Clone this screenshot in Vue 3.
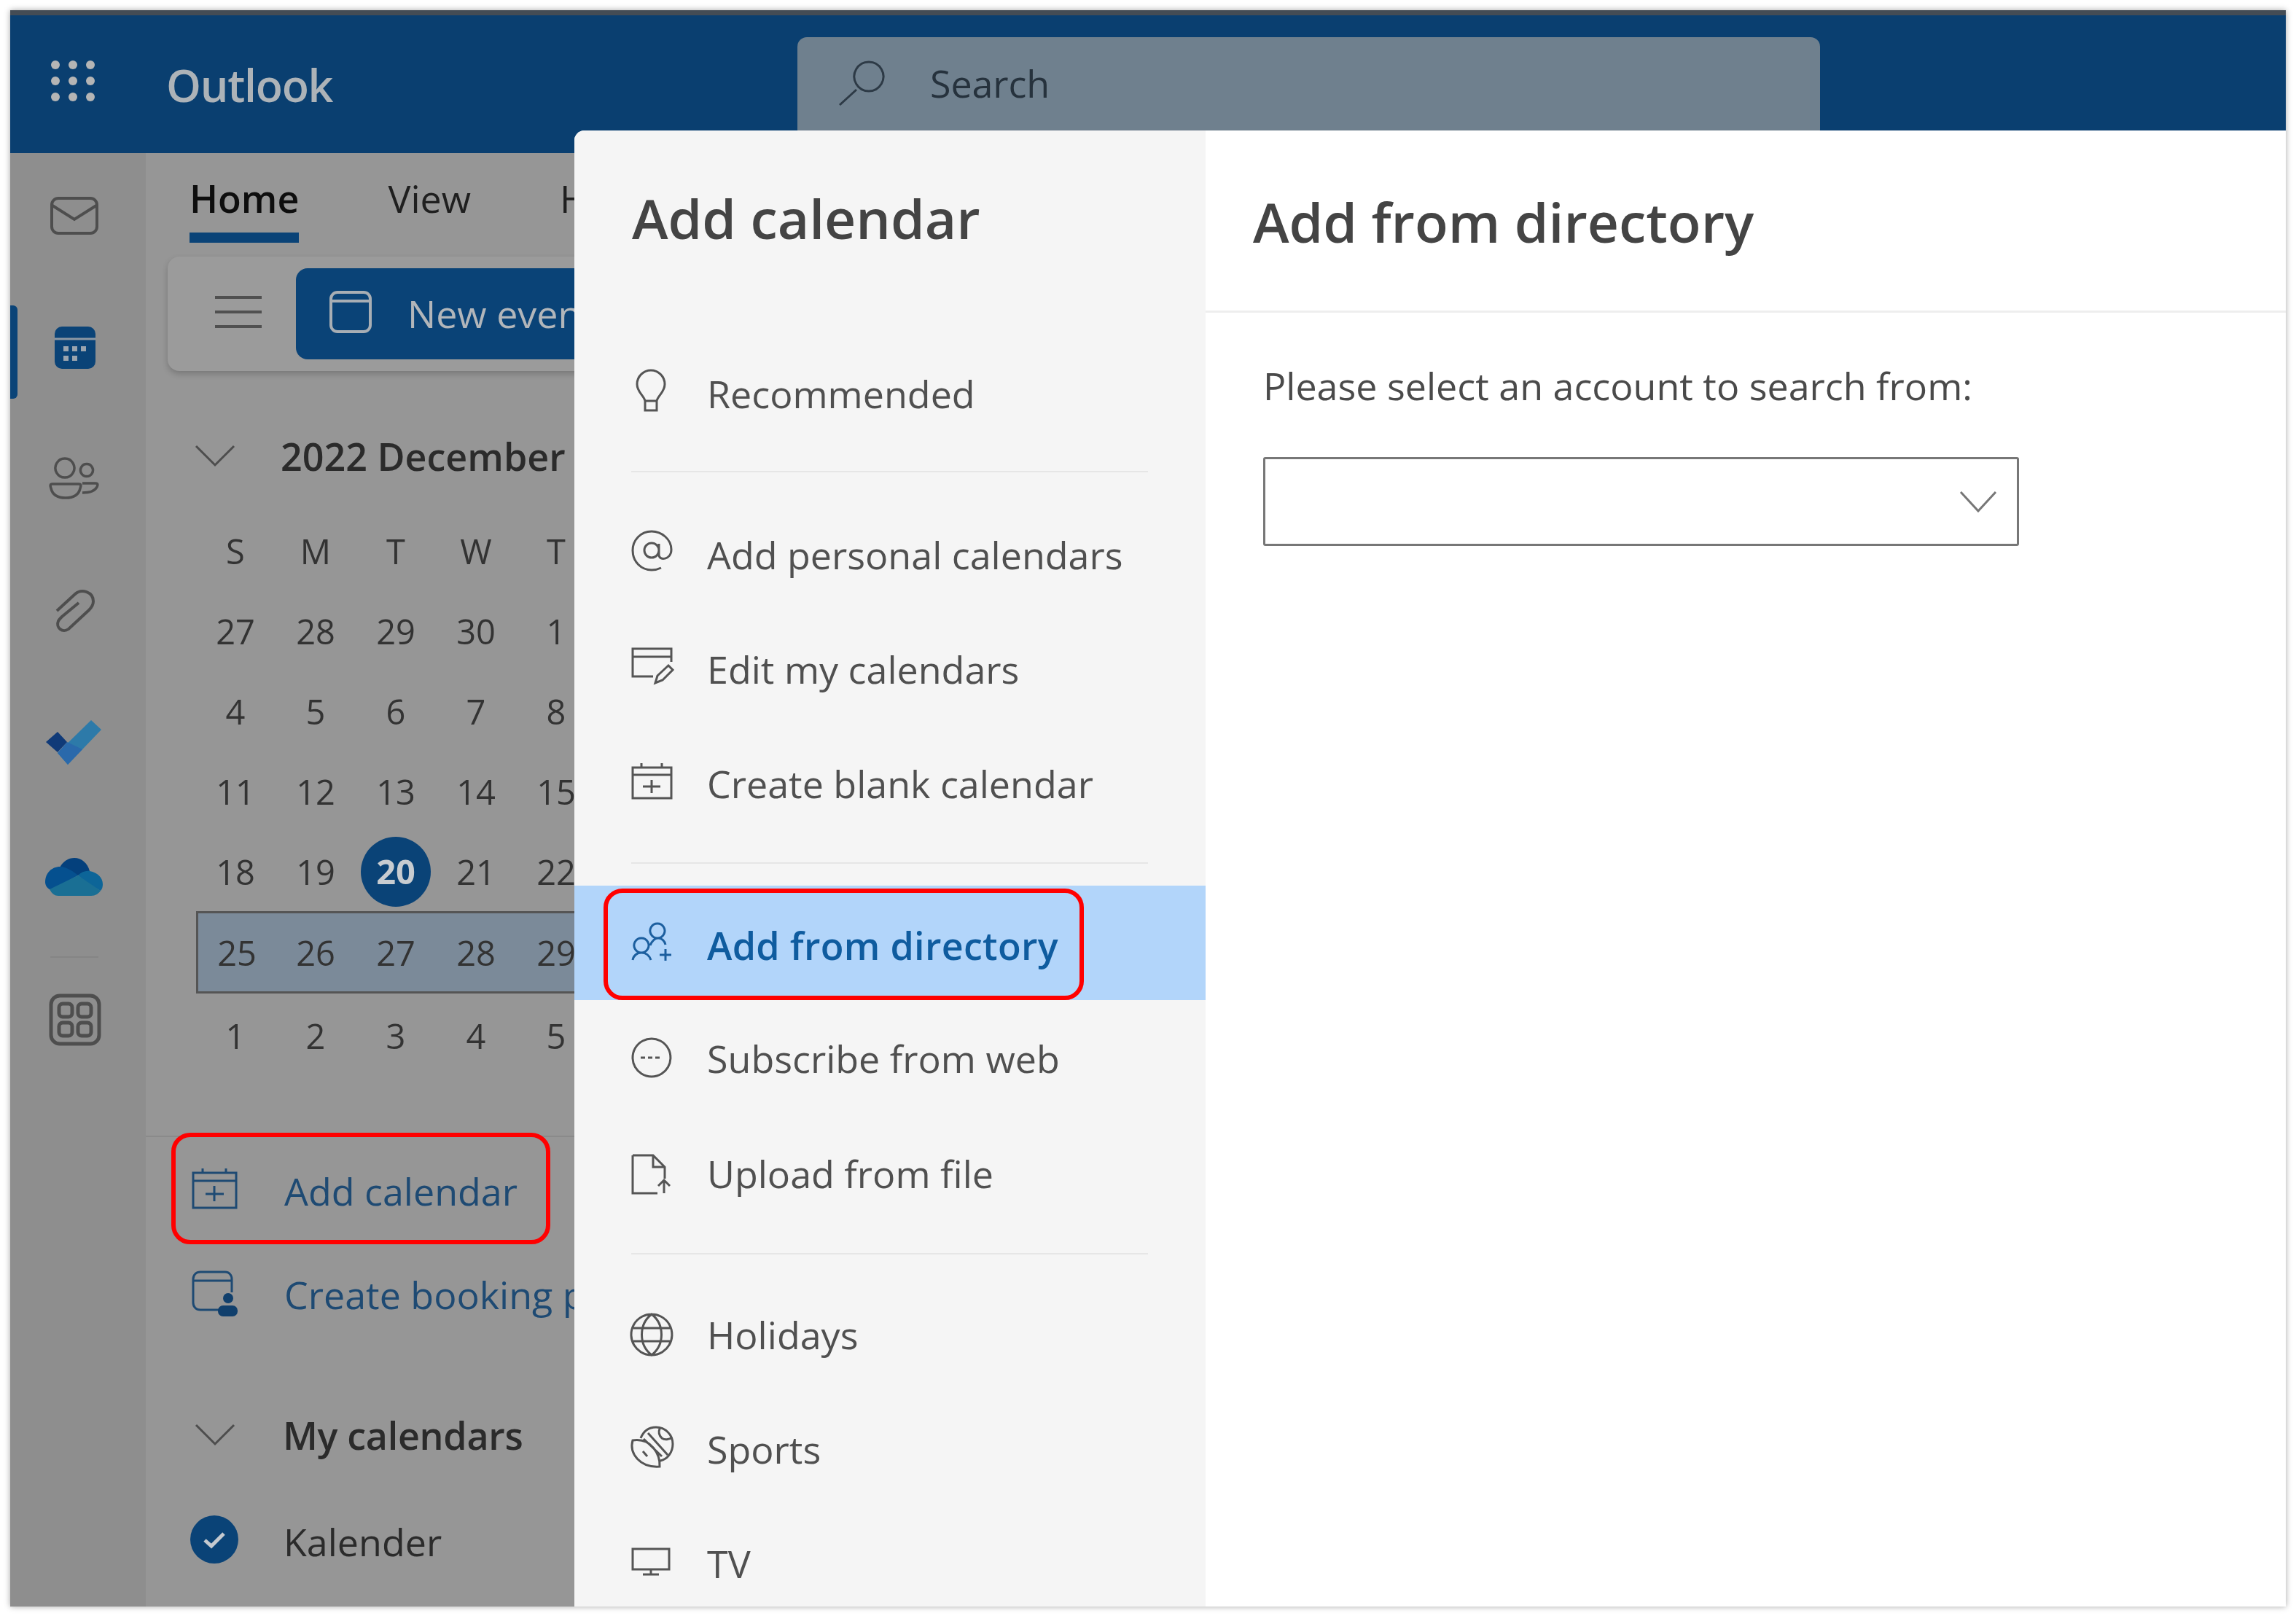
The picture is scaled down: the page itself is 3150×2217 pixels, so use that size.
<script setup>
const dayNames = ['S', 'M', 'T', 'W', 'T', 'F']
const weeks = [
  { days: ['27', '28', '29', '30', '1', '2'] },
  { days: ['4', '5', '6', '7', '8', '9'] },
  { days: ['11', '12', '13', '14', '15', '16'] },
  { days: ['18', '19', '20', '21', '22', '23'] },
  { days: ['25', '26', '27', '28', '29', '30'], selected: true },
  { days: ['1', '2', '3', '4', '5', '6'], last: true }
]
const groups = [
  [{ label: 'Recommended', icon: 'M19 40C17 32 8 28 8 17A19 19 0 0 1 46 17C46 28 37 32 35 40ZM19 40V53H35V40' }],
  [
    { label: 'Add personal calendars', icon: 'M38 15V30C38 39 55 37 55 23C55 9 42-2 28-2C13-2 2 10 2 24C2 40 14 51 28 51C33 51 37 50 41 48M38 24A10 10 0 1 1 18 24A10 10 0 1 1 38 24' },
    { label: 'Edit my calendars', icon: 'M30 40H2V2H55V20M2 13H55M33 49L36 39L51 25L57 31L43 45Z' },
    { label: 'Create blank calendar', icon: 'M2 8H55V50H2ZM2 18H55M14 2V8M42 2V8M28 25V43M16 34H40' }
  ],
  [
    { label: 'Add from directory', active: true, icon: 'M36 3A10 10 0 1 1 35.9 3ZM14 23A10 10 0 1 1 13.9 23ZM2 53C3 47 8 43 14 43C20 43 25 47 27 53M26 33C29 26 32 23 37 23C42 23 46 27 47 32M39 46H55M47 38V54' },
    { label: 'Subscribe from web', icon: 'M28 4A26 26 0 1 1 27.9 4ZM13 30H19M23 30H29M33 30H39' },
    { label: 'Upload from file', icon: 'M2 6H30L46 22V38M30 6V22H46M2 6V58H36M45 58V40M37 48L45 40L53 48' }
  ],
  [
    { label: 'Holidays', icon: 'M28 2A28 28 0 1 1 27.9 2ZM28 2C10 16 10 44 28 58C46 44 46 16 28 2ZM3 21H53M3 39H53' },
    { label: 'Sports', icon: 'M2 18C-3 36 12 56 39 54C40 38 28 14 2 18ZM16 33L22 40M13 15C17 5 25 0 34 0A23 23 0 0 1 57 23C57 34 50 44 40 46M23 8L50 38M17 16L42 40M39 2C37 7 39 12 42 15C46 18 52 17 56 14' },
    { label: 'TV', icon: 'M2 10H52V38H2ZM27 38V45M16 45H38' }
  ]
]
</script>

<template>
  <div class="page">
    <div class="frame">
      <header class="topbar">
        <div class="waffle"><i v-for="n in 9" :key="n"></i></div>
        <div class="brand">Outlook</div>
        <div class="search">
          <svg class="search-icon" viewBox="0 0 64 62"><path d="M26 40L3 61M43 2A20 20 0 1 1 42.9 2Z" /></svg>
          <span>Search</span>
        </div>
      </header>

      <div class="workspace">
        <nav class="rail">
          <svg class="r-mail" viewBox="0 0 66 52"><rect x="2" y="2" width="62" height="48" rx="9" /><path d="M3 12L33 31L63 12" /></svg>
          <div class="rail-active"><i></i>
            <svg class="r-cal" viewBox="0 0 56 58"><rect width="56" height="58" rx="10" fill="#0a4377" /><path d="M0 17H56" stroke="#8c98a3" stroke-width="3" /><g fill="#9aa4ae" stroke="none"><rect x="12" y="27" width="7" height="7" /><rect x="24" y="27" width="7" height="7" /><rect x="36" y="27" width="7" height="7" /><rect x="12" y="40" width="7" height="7" /><rect x="24" y="40" width="7" height="7" /></g></svg>
          </div>
          <svg class="r-people" viewBox="0 0 68 54"><path d="M20-2A13 13 0 1 1 19.900-2ZM3 33H39C43 33 42 36 41 39C39 48 31 52 21 52C11 52 3 48 1 39C0 36-1 33 3 33ZM50 5.500A8.500 8.500 0 1 1 49.900 5.500ZM44 32H62C66 32 65 35 64 37C61 43 54 45 44 45" /></svg>
          <svg class="r-clip" viewBox="0 0 50 58"><path d="M0 29L25 6C34-2 50 3 50 16C50 21 47 25 44 28L16 54C8 60-2 52 2 43C3 41 5 39 7 37L30 18" /></svg>
          <svg class="r-todo" viewBox="0 0 76 61"><path d="M62 0L76 13L30 61L16 45Z" fill="#2d7aa9" /><path d="M29 30L16 45L30 61L50 40Z" fill="#2a69ab" /><path d="M0 30L16 16L29 30L16 44Z" fill="#103a78" /></svg>
          <svg class="r-drive" viewBox="0 0 79 52"><path d="M20 13C25 4 32 0 40 0C50 0 58 7 61 18L45 24L30 22Z" fill="#04407c" /><path d="M0 33C0 20 10 11 22 12C30 13 38 18 45 24L8 44C3 42 0 38 0 33Z" fill="#05508f" /><path d="M45 24C50 19 56 17 61 18C72 20 79 27 79 36C79 40 78 43 76 45L60 36Z" fill="#0d6598" /><path d="M6 43L45 24L76 45C73 49 69 52 63 52H18C13 52 9 49 6 43Z" fill="#1a6f94" /></svg>
          <div class="rail-rule"></div>
          <svg class="r-apps" viewBox="0 0 72 72"><rect x="3" y="3" width="66" height="66" rx="12" /><rect x="14" y="14" width="18" height="18" rx="5" /><rect x="40" y="14" width="18" height="18" rx="5" /><rect x="14" y="40" width="18" height="18" rx="5" /><rect x="40" y="40" width="18" height="18" rx="5" /></svg>
        </nav>

        <main class="main">
          <div class="tabs">
            <div class="tab on">Home</div>
            <div class="tab">View</div>
            <div class="tab">Help</div>
          </div>

          <div class="ribbon">
            <div class="burger"><i></i><i></i><i></i></div>
            <div class="new-event">
              <svg viewBox="0 0 58 58"><rect x="2" y="2" width="54" height="54" rx="9" /><path d="M2 14H56" /></svg>
              <span>New event</span>
            </div>
          </div>

          <div class="month">
            <svg class="chev" viewBox="0 0 54 28"><path d="M1 1L27 27L53 1" /></svg>
            <span>2022 December</span>
          </div>

          <div class="cal-head"><span v-for="(d, i) in dayNames" :key="i">{{ d }}</span></div>
          <div v-for="(w, wi) in weeks" :key="wi" class="cal-row" :class="{ selected: w.selected, last: w.last }">
            <span v-for="(d, di) in w.days" :key="di" :class="{ today: wi === 3 && di === 2 }">{{ d }}</span>
          </div>

          <div class="side-links">
            <div class="link first">
              <svg viewBox="0 0 63 58"><path d="M2 8H61V56H2ZM2 19H61M15 2V8M47 2V8M31 26V47M19 37H44" /></svg>
              <span>Add calendar</span>
            </div>
            <div class="link second">
              <svg viewBox="0 0 63 64"><path d="M38 54H12C6 54 2 50 2 44V12C2 6 6 2 12 2H46C51 2 55 6 55 12V30M2 14H55" /><circle cx="50" cy="38" r="7" fill="#103f6c" stroke="none" /><rect x="36" y="48" width="27" height="15" rx="7" fill="#103f6c" stroke="none" /></svg>
              <span>Create booking page</span>
            </div>
          </div>

          <div class="section">
            <svg class="chev" viewBox="0 0 54 28"><path d="M1 1L27 27L53 1" /></svg>
            <span>My calendars</span>
          </div>
          <div class="cal-item">
            <div class="tick"><svg viewBox="0 0 30 22"><path d="M2 12L11 20L28 3" /></svg></div>
            <span>Kalender</span>
          </div>
        </main>
      </div>

      <section class="modal">
        <aside class="modal-nav">
          <h2>Add calendar</h2>
          <div v-for="(g, gi) in groups" :key="gi" class="group" :class="'g' + gi">
            <div v-for="item in g" :key="item.label" class="item" :class="{ active: item.active }">
              <svg viewBox="0 0 60 60"><path :d="item.icon" /></svg>
              <span>{{ item.label }}</span>
            </div>
          </div>
        </aside>
        <div class="modal-body">
          <div class="body-head"><h2>Add from directory</h2></div>
          <div class="body-form">
            <p>Please select an account to search from:</p>
            <div class="select">
              <svg viewBox="0 0 50 28"><path d="M1 1L25 27L49 1" /></svg>
            </div>
          </div>
        </div>
      </section>

      <div class="mark mark-add"></div>
      <div class="mark mark-dir"></div>
    </div>
  </div>
</template>

<style>
html, body { margin: 0; background: #fff; }
</style>

<style scoped>
.page {
  width: 3150px; height: 2217px; box-sizing: border-box;
  padding: 14px 14px 13px 14px; background: #fff;
  font-family: "Open Sans", "Noto Sans", sans-serif; overflow: hidden;
}
.frame {
  position: relative; width: 100%; height: 100%; display: flex; flex-direction: column;
  overflow: hidden; box-shadow: 0 0 8px rgba(0, 0, 0, .35);
  filter: blur(.5px);
}
svg { display: block; fill: none; flex: none; overflow: visible; }
.topbar {
  height: 196px; flex: none; box-sizing: border-box; border-top: 7px solid #444c55;
  background: #0a3f70; display: flex; align-items: flex-start; color: #b0b5b9;
}
.waffle {
  margin: 62px 0 0 56px; width: 62px; display: grid; grid-template-columns: repeat(3, 12px);
  gap: 10px 12px;
}
.waffle i { width: 12px; height: 12px; border-radius: 50%; background: #b5b5b5; }
.brand { margin: 54px 0 0 96px; font-size: 61px; line-height: 84px; font-weight: 600; letter-spacing: -1.3px; color: #adb3b8; width: 182px; white-space: nowrap; }
.search {
  margin: 30px 0 0 684px; width: 1403px; height: 140px; border-radius: 13px; background: #6f808e;
  display: flex; align-items: flex-start; color: #2c3a47; font-size: 52px; box-sizing: border-box; padding: 32px 0 0 55px;
}
.search span { line-height: 66px; margin: -2px 0 0 63px; color: #26323d; letter-spacing: -.1px; }
.search-icon { width: 64px; height: 62px; stroke: #2d3a46; stroke-width: 3; }
.workspace { flex: 1; display: flex; min-height: 0; background: #969696; }
.rail { width: 186px; flex: none; background: #8e8e8e; position: relative; display: flex; flex-direction: column; align-items: flex-start; }
.rail svg { stroke: #4e4e4e; stroke-width: 4; }
.r-mail { width: 66px; height: 52px; margin: 60px 0 0 55px; }
.rail-active { position: relative; margin-top: 97px; height: 128px; width: 100%; }
.rail-active i { position: absolute; left: 0; top: 0; width: 10px; height: 128px; border-radius: 0 6px 6px 0; background: #0a4377; }
.rail .r-cal { position: absolute; left: 61px; top: 29px; width: 56px; height: 58px; stroke: none; }
.r-people { width: 68px; height: 54px; margin: 84px 0 0 55px; }
.rail .r-people { stroke-width: 3.5; }
.r-clip { width: 50px; height: 58px; margin: 124px 0 0 64px; }
.rail .r-clip { stroke-width: 4; }
.rail .r-todo { width: 76px; height: 61px; margin: 121px 0 0 49px; stroke: none; }
.rail .r-drive { width: 79px; height: 52px; margin: 128px 0 0 48px; stroke: none; }
.rail-rule { width: 66px; height: 2px; background: #858585; margin: 83px 0 0 55px; }
.r-apps { width: 72px; height: 72px; margin: 49px 0 0 53px; }
.rail .r-apps { stroke-width: 5; }

.main { flex: 1; min-width: 0; overflow: hidden; color: #2b2b2b; }
.tabs { height: 123px; box-sizing: border-box; display: flex; padding-left: 60px; }
.tab { font-size: 52px; line-height: 70px; margin-top: 27px; margin-right: 122px; height: 96px; color: #1f1f1f; white-space: nowrap; }
.tab.on { font-weight: 600; color: #0e0e0e; box-sizing: border-box; border-bottom: 14px solid #0a4377; }
.ribbon {
  margin: 19px 0 0 30px; width: 1000px; height: 157px; box-sizing: border-box; padding: 16px 0 0 65px;
  background: #9b9b9b; border-radius: 16px; box-shadow: 0 4px 8px rgba(0, 0, 0, .2); display: flex;
}
.burger { width: 64px; height: 44px; margin-top: 38px; display: flex; flex-direction: column; justify-content: space-between; }
.burger i { height: 4px; background: #505050; display: block; }
.new-event {
  margin-left: 47px; width: 600px; height: 125px; box-sizing: border-box; padding: 31px 0 0 46px;
  border-radius: 16px; background: #0a4377; display: flex; color: #b2b6ba; font-size: 52px;
}
.new-event svg { width: 58px; height: 58px; stroke: #a8aeb4; stroke-width: 4; }
.new-event span { margin-left: 49px; line-height: 62px; white-space: nowrap; }
.month { margin: 81px 0 0 68px; height: 70px; display: flex; align-items: center; }
.chev { width: 54px; height: 28px; stroke: #4d4d4d; stroke-width: 3; }
.month span { margin-left: 63px; font-size: 52px; font-weight: 600; color: #2b2b2b; white-space: nowrap; }
.cal-head, .cal-row { display: grid; grid-template-columns: repeat(6, 110px); padding-left: 68px; font-size: 47px; color: #333; text-align: center; }
.cal-head { margin-top: 41px; height: 110px; align-items: center; }
.cal-row { height: 110px; align-items: center; }
.cal-row.last { margin-top: 3px; }
.cal-row.selected {
  margin-left: 69px; padding-left: 0; box-sizing: border-box; height: 113px; margin-top: -1px;
  background: #7b8a99; border: 3px solid #555; border-right: 0; grid-template-columns: 106px repeat(5, 110px);
}
.today { justify-self: center; width: 96px; height: 96px; line-height: 94px; border-radius: 50%; background: #0a4377; color: #c8ccd0; font-weight: 700; }
.side-links { margin-top: 82px; border-top: 2px solid #8a8a8a; }
.link { display: flex; align-items: center; padding-left: 63px; color: #1e4a73; font-size: 52px; white-space: nowrap; }
.link svg { width: 63px; stroke: #1e4a73; stroke-width: 3; }
.link span { margin-left: 64px; }
.link.first { height: 150px; }
.link.first svg { height: 58px; margin-top: -10px; }
.link.first span { margin-top: -4px; }
.link.second { height: 130px; }
.section { margin-top: 90px; height: 76px; display: flex; align-items: center; padding-left: 68px; }
.section span { margin-left: 66px; font-size: 52px; font-weight: 600; letter-spacing: -.3px; color: #2b2b2b; }
.cal-item { margin-top: 68px; height: 76px; display: flex; align-items: center; padding-left: 61px; }
.tick { width: 66px; height: 66px; border-radius: 50%; background: #0a4377; display: flex; align-items: center; justify-content: center; }
.tick svg { width: 30px; height: 22px; stroke: #c5cad0; stroke-width: 5; }
.cal-item span { margin: 5px 0 0 62px; font-size: 52px; color: #2b2b2b; }

.modal {
  position: absolute; left: 774px; top: 165px; right: 0; bottom: 0; display: flex;
  background: #fff; border-top-left-radius: 14px; overflow: hidden;
}
.modal-nav { width: 866px; flex: none; background: #f5f5f5; overflow: hidden; }
.modal-nav h2 { margin: 0; box-sizing: border-box; height: 282px; padding: 70px 0 0 79px; font-size: 75px; line-height: 100px; font-weight: 600; color: #444; }
.group { position: relative; }
.g1 { margin-top: 64px; }
.g2 { margin-top: 62px; }
.g3 { margin-top: 64px; }
.g1::before, .g2::before, .g3::before { content: ""; position: absolute; left: 78px; width: 709px; height: 2px; background: #e6e6e6; }
.g1::before { top: -36px; }
.g2::before { top: -32px; }
.g3::before { top: -33px; }
.item { height: 157px; display: flex; align-items: center; padding-left: 78px; font-size: 52px; color: #505050; white-space: nowrap; }
.g2 .item:nth-child(2) { height: 158px; }
.g2 .item:nth-child(3) { height: 158px; }
.item svg { width: 60px; height: 60px; stroke: #555; stroke-width: 3; }
.item span { margin-left: 44px; }
.item.active { background: #b2d5fa; color: #0f5c9f; font-weight: 600; }
.item.active svg { stroke: #1c5f9f; }
.item.active span { letter-spacing: .3px; margin-top: 6px; }
.modal-body { flex: 1; min-width: 0; background: #fff; }
.body-head { height: 250px; box-sizing: border-box; border-bottom: 3px solid #eeeeee; padding: 75px 0 0 65px; }
.body-head h2 { margin: 0; font-size: 75px; line-height: 100px; font-weight: 600; color: #444; white-space: nowrap; }
.body-form { padding: 61px 0 0 79px; }
.body-form p { margin: 0; font-size: 52px; line-height: 78px; color: #4a4a4a; white-space: nowrap; }
.select { margin-top: 59px; width: 1037px; height: 122px; box-sizing: border-box; border: 3px solid #777; border-radius: 3px; display: flex; align-items: center; justify-content: flex-end; padding-right: 28px; }
.select svg { width: 50px; height: 28px; stroke: #777; stroke-width: 3; }

.mark { position: absolute; box-sizing: border-box; border: 6px solid #f00; z-index: 5; }
.mark-add { left: 221px; top: 1540px; width: 520px; height: 153px; border-radius: 26px; }
.mark-dir { left: 814px; top: 1205px; width: 659px; height: 153px; border-radius: 26px; }
</style>
